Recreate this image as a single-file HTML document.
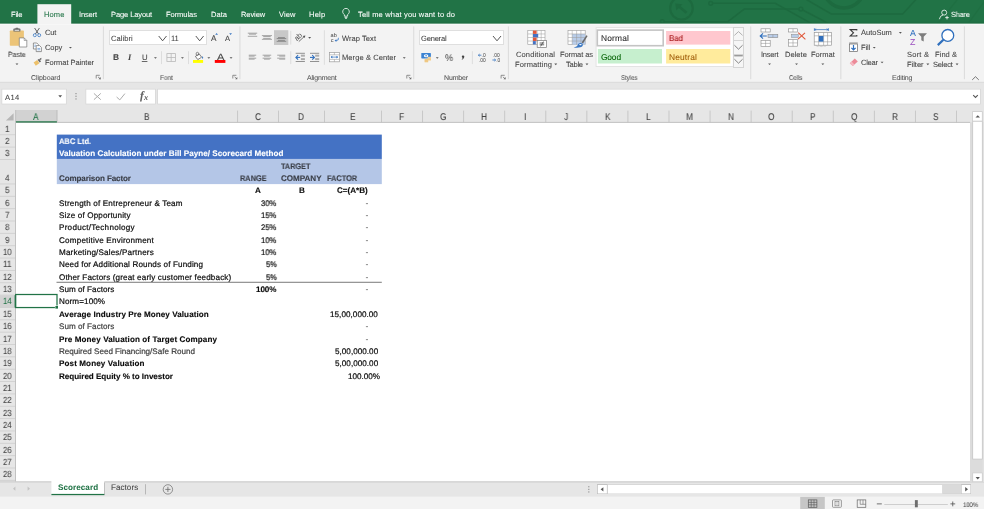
<!DOCTYPE html>
<html><head><meta charset="utf-8"><title>Excel</title>
<style>
html,body{margin:0;padding:0;}
body{width:984px;height:509px;overflow:hidden;position:relative;background:#fff;font-family:"Liberation Sans",sans-serif;}
body>div,body>span,body>svg{position:absolute;}
.t{white-space:pre;line-height:1;display:block;text-rendering:geometricPrecision;will-change:transform;}
svg{overflow:visible;display:block;}
</style></head><body>
<svg style="left:0;top:0" width="984" height="509" viewBox="0 0 984 509" shape-rendering="geometricPrecision"><rect x="0.00" y="0.00" width="984.00" height="82.20" fill="#f3f3f3"/><rect x="0.00" y="0.00" width="984.00" height="23.40" fill="#217346"/><rect x="0.00" y="21.90" width="984.00" height="1.50" fill="#1f6e43"/></svg>
<svg style="left:0;top:0;overflow:hidden" width="984" height="23.4" viewBox="0 0 984 23.4"><g fill="none" stroke="#1d6a3f" stroke-width="1.5">
<circle cx="681.5" cy="8.2" r="11.3" stroke-width="2.1"/>
<path d="M686.6 12.8 L677.2 4.9" stroke-width="2.6"/><path d="M675.4 3.4 L682.6 4.2 L676.4 10.4 Z" fill="#1d6a3f" stroke="none"/>
<circle cx="710.8" cy="3.3" r="1.9"/>
<path d="M712.8 3.3 H775.4 L812 23.8"/>
<circle cx="662.3" cy="21.6" r="1.9"/>
<path d="M664.3 21.8 H727.8 L744.3 9.1 H799"/>
<circle cx="801" cy="9.1" r="1.9"/>
<path d="M802.8 10 L822 20 L829 24"/>
<path d="M806.5 -0.5 L831.4 13.9 H902.8 L916.2 -0.5"/>
<circle cx="844" cy="-12.3" r="20.3" stroke-width="3.4"/>
<path d="M957.6 -0.5 L938 24" stroke-width="1.2" stroke="#1f6f42"/>
<path d="M985 1 L968 24" stroke-width="1.2" stroke="#1f6f42"/>
</g></svg>
<svg style="left:0;top:0" width="984" height="509" viewBox="0 0 984 509" shape-rendering="geometricPrecision"><rect x="0.00" y="24.00" width="984.00" height="0.90" fill="#f9f9f9"/><rect x="37.40" y="4.20" width="33.80" height="20.00" fill="#f3f3f3"/><rect x="0.00" y="82.00" width="984.00" height="28.00" fill="#e6e6e6"/><rect x="0.00" y="81.80" width="984.00" height="1.00" fill="#dbdbdb"/><rect x="1.50" y="88.80" width="65.20" height="15.60" fill="#d8d8d8"/><rect x="2.25" y="89.55" width="63.70" height="14.10" fill="#fff"/><rect x="85.50" y="88.80" width="70.30" height="15.60" fill="#d8d8d8"/><rect x="86.25" y="89.55" width="68.80" height="14.10" fill="#fff"/><rect x="157.20" y="88.80" width="823.60" height="15.60" fill="#d8d8d8"/><rect x="157.95" y="89.55" width="822.10" height="14.10" fill="#fff"/><rect x="0.00" y="110.00" width="984.00" height="371.70" fill="#e6e6e6"/><rect x="15.50" y="122.40" width="954.50" height="359.20" fill="#fff"/><rect x="0.00" y="481.60" width="984.00" height="27.40" fill="#f3f3f3"/><rect x="0.00" y="481.60" width="984.00" height="15.00" fill="#e6e6e6"/><rect x="0.00" y="481.40" width="984.00" height="1.00" fill="#c9c9c9"/></svg>
<span class="t" style="left:11.30px;top:11px;font-size:7.5px;color:#fff;letter-spacing:-0.195px;-webkit-text-stroke:0.07px currentColor;">File</span>
<span class="t" style="left:78.70px;top:11px;font-size:7.5px;color:#fff;letter-spacing:-0.152px;-webkit-text-stroke:0.07px currentColor;">Insert</span>
<span class="t" style="left:110.80px;top:11px;font-size:7.5px;color:#fff;letter-spacing:-0.092px;-webkit-text-stroke:0.07px currentColor;">Page Layout</span>
<span class="t" style="left:165.80px;top:11px;font-size:7.5px;color:#fff;letter-spacing:-0.051px;-webkit-text-stroke:0.07px currentColor;">Formulas</span>
<span class="t" style="left:210.80px;top:11px;font-size:7.5px;color:#fff;letter-spacing:0.019px;-webkit-text-stroke:0.07px currentColor;">Data</span>
<span class="t" style="left:240.80px;top:11px;font-size:7.5px;color:#fff;letter-spacing:-0.078px;-webkit-text-stroke:0.07px currentColor;">Review</span>
<span class="t" style="left:278.70px;top:11px;font-size:7.5px;color:#fff;letter-spacing:0.060px;-webkit-text-stroke:0.07px currentColor;">View</span>
<span class="t" style="left:309.20px;top:11px;font-size:7.5px;color:#fff;letter-spacing:0.225px;-webkit-text-stroke:0.07px currentColor;">Help</span>
<span class="t" style="left:358.30px;top:11px;font-size:7.5px;color:#fff;letter-spacing:0.171px;-webkit-text-stroke:0.07px currentColor;">Tell me what you want to do</span>
<span class="t" style="left:950.60px;top:11px;font-size:7.5px;color:#fff;transform:scaleX(0.9393);transform-origin:0 0;-webkit-text-stroke:0.07px currentColor;">Share</span>
<span class="t" style="left:43.80px;top:11px;font-size:7.5px;color:#217346;letter-spacing:0.131px;-webkit-text-stroke:0.07px currentColor;">Home</span>
<svg style="left:0;top:0" width="984" height="509" viewBox="0 0 984 509" shape-rendering="geometricPrecision"><rect x="15.90" y="110.00" width="41.00" height="12.40" fill="#d2d2d2"/></svg>
<span class="t" style="left:33.44px;top:113px;font-size:9.8px;color:#217346;transform:scaleX(0.86);transform-origin:0 0;-webkit-text-stroke:0.07px currentColor;">A</span>
<svg style="left:0;top:0" width="984" height="509" viewBox="0 0 984 509" shape-rendering="geometricPrecision"><rect x="56.55" y="110.00" width="0.90" height="11.80" fill="#b8b8b8"/></svg>
<span class="t" style="left:144.49px;top:113px;font-size:9.8px;color:#444;transform:scaleX(0.86);transform-origin:0 0;-webkit-text-stroke:0.07px currentColor;">B</span>
<svg style="left:0;top:0" width="984" height="509" viewBox="0 0 984 509" shape-rendering="geometricPrecision"><rect x="237.15" y="110.60" width="0.90" height="11.80" fill="#c4c4c4"/></svg>
<span class="t" style="left:255.01px;top:113px;font-size:9.8px;color:#444;transform:scaleX(0.86);transform-origin:0 0;-webkit-text-stroke:0.07px currentColor;">C</span>
<svg style="left:0;top:0" width="984" height="509" viewBox="0 0 984 509" shape-rendering="geometricPrecision"><rect x="278.05" y="110.60" width="0.90" height="11.80" fill="#c4c4c4"/></svg>
<span class="t" style="left:298.46px;top:113px;font-size:9.8px;color:#444;transform:scaleX(0.86);transform-origin:0 0;-webkit-text-stroke:0.07px currentColor;">D</span>
<svg style="left:0;top:0" width="984" height="509" viewBox="0 0 984 509" shape-rendering="geometricPrecision"><rect x="324.05" y="110.60" width="0.90" height="11.80" fill="#c4c4c4"/></svg>
<span class="t" style="left:350.19px;top:113px;font-size:9.8px;color:#444;transform:scaleX(0.86);transform-origin:0 0;-webkit-text-stroke:0.07px currentColor;">E</span>
<svg style="left:0;top:0" width="984" height="509" viewBox="0 0 984 509" shape-rendering="geometricPrecision"><rect x="381.05" y="110.60" width="0.90" height="11.80" fill="#c4c4c4"/></svg>
<span class="t" style="left:399.46px;top:113px;font-size:9.8px;color:#444;transform:scaleX(0.86);transform-origin:0 0;-webkit-text-stroke:0.07px currentColor;">F</span>
<svg style="left:0;top:0" width="984" height="509" viewBox="0 0 984 509" shape-rendering="geometricPrecision"><rect x="422.12" y="110.60" width="0.90" height="11.80" fill="#c4c4c4"/></svg>
<span class="t" style="left:439.83px;top:113px;font-size:9.8px;color:#444;transform:scaleX(0.86);transform-origin:0 0;-webkit-text-stroke:0.07px currentColor;">G</span>
<svg style="left:0;top:0" width="984" height="509" viewBox="0 0 984 509" shape-rendering="geometricPrecision"><rect x="463.19" y="110.60" width="0.90" height="11.80" fill="#c4c4c4"/></svg>
<span class="t" style="left:481.13px;top:113px;font-size:9.8px;color:#444;transform:scaleX(0.86);transform-origin:0 0;-webkit-text-stroke:0.07px currentColor;">H</span>
<svg style="left:0;top:0" width="984" height="509" viewBox="0 0 984 509" shape-rendering="geometricPrecision"><rect x="504.26" y="110.60" width="0.90" height="11.80" fill="#c4c4c4"/></svg>
<span class="t" style="left:524.07px;top:113px;font-size:9.8px;color:#444;transform:scaleX(0.86);transform-origin:0 0;-webkit-text-stroke:0.07px currentColor;">I</span>
<svg style="left:0;top:0" width="984" height="509" viewBox="0 0 984 509" shape-rendering="geometricPrecision"><rect x="545.33" y="110.60" width="0.90" height="11.80" fill="#c4c4c4"/></svg>
<span class="t" style="left:564.21px;top:113px;font-size:9.8px;color:#444;transform:scaleX(0.86);transform-origin:0 0;-webkit-text-stroke:0.07px currentColor;">J</span>
<svg style="left:0;top:0" width="984" height="509" viewBox="0 0 984 509" shape-rendering="geometricPrecision"><rect x="586.40" y="110.60" width="0.90" height="11.80" fill="#c4c4c4"/></svg>
<span class="t" style="left:604.57px;top:113px;font-size:9.8px;color:#444;transform:scaleX(0.86);transform-origin:0 0;-webkit-text-stroke:0.07px currentColor;">K</span>
<svg style="left:0;top:0" width="984" height="509" viewBox="0 0 984 509" shape-rendering="geometricPrecision"><rect x="627.47" y="110.60" width="0.90" height="11.80" fill="#c4c4c4"/></svg>
<span class="t" style="left:646.11px;top:113px;font-size:9.8px;color:#444;transform:scaleX(0.86);transform-origin:0 0;-webkit-text-stroke:0.07px currentColor;">L</span>
<svg style="left:0;top:0" width="984" height="509" viewBox="0 0 984 509" shape-rendering="geometricPrecision"><rect x="668.54" y="110.60" width="0.90" height="11.80" fill="#c4c4c4"/></svg>
<span class="t" style="left:686.01px;top:113px;font-size:9.8px;color:#444;transform:scaleX(0.86);transform-origin:0 0;-webkit-text-stroke:0.07px currentColor;">M</span>
<svg style="left:0;top:0" width="984" height="509" viewBox="0 0 984 509" shape-rendering="geometricPrecision"><rect x="709.61" y="110.60" width="0.90" height="11.80" fill="#c4c4c4"/></svg>
<span class="t" style="left:727.55px;top:113px;font-size:9.8px;color:#444;transform:scaleX(0.86);transform-origin:0 0;-webkit-text-stroke:0.07px currentColor;">N</span>
<svg style="left:0;top:0" width="984" height="509" viewBox="0 0 984 509" shape-rendering="geometricPrecision"><rect x="750.68" y="110.60" width="0.90" height="11.80" fill="#c4c4c4"/></svg>
<span class="t" style="left:768.39px;top:113px;font-size:9.8px;color:#444;transform:scaleX(0.86);transform-origin:0 0;-webkit-text-stroke:0.07px currentColor;">O</span>
<svg style="left:0;top:0" width="984" height="509" viewBox="0 0 984 509" shape-rendering="geometricPrecision"><rect x="791.75" y="110.60" width="0.90" height="11.80" fill="#c4c4c4"/></svg>
<span class="t" style="left:809.92px;top:113px;font-size:9.8px;color:#444;transform:scaleX(0.86);transform-origin:0 0;-webkit-text-stroke:0.07px currentColor;">P</span>
<svg style="left:0;top:0" width="984" height="509" viewBox="0 0 984 509" shape-rendering="geometricPrecision"><rect x="832.82" y="110.60" width="0.90" height="11.80" fill="#c4c4c4"/></svg>
<span class="t" style="left:850.53px;top:113px;font-size:9.8px;color:#444;transform:scaleX(0.86);transform-origin:0 0;-webkit-text-stroke:0.07px currentColor;">Q</span>
<svg style="left:0;top:0" width="984" height="509" viewBox="0 0 984 509" shape-rendering="geometricPrecision"><rect x="873.89" y="110.60" width="0.90" height="11.80" fill="#c4c4c4"/></svg>
<span class="t" style="left:891.83px;top:113px;font-size:9.8px;color:#444;transform:scaleX(0.86);transform-origin:0 0;-webkit-text-stroke:0.07px currentColor;">R</span>
<svg style="left:0;top:0" width="984" height="509" viewBox="0 0 984 509" shape-rendering="geometricPrecision"><rect x="914.96" y="110.60" width="0.90" height="11.80" fill="#c4c4c4"/></svg>
<span class="t" style="left:933.13px;top:113px;font-size:9.8px;color:#444;transform:scaleX(0.86);transform-origin:0 0;-webkit-text-stroke:0.07px currentColor;">S</span>
<svg style="left:0;top:0" width="984" height="509" viewBox="0 0 984 509" shape-rendering="geometricPrecision"><rect x="956.03" y="110.60" width="0.90" height="11.80" fill="#c4c4c4"/><rect x="15.20" y="110.00" width="0.90" height="12.40" fill="#bdbdbd"/><rect x="15.50" y="121.90" width="955.00" height="0.90" fill="#bcbcbc"/><rect x="15.90" y="121.25" width="41.00" height="1.30" fill="#2a7a4e"/></svg>
<svg style="left:0.00px;top:110.00px" width="16" height="12.4" viewBox="0 0 16 12.4"><path d="M13.6 3.2 V10.6 H5.9 Z" fill="#b7b7b7"/></svg>
<span class="t" style="left:4.75px;top:125px;font-size:9.0px;color:#444;transform:scaleX(0.9);transform-origin:0 0;-webkit-text-stroke:0.07px currentColor;">1</span>
<svg style="left:0;top:0" width="984" height="509" viewBox="0 0 984 509" shape-rendering="geometricPrecision"><rect x="0.00" y="134.30" width="15.50" height="0.90" fill="#d0d0d0"/></svg>
<span class="t" style="left:4.75px;top:137px;font-size:9.0px;color:#444;transform:scaleX(0.9);transform-origin:0 0;-webkit-text-stroke:0.07px currentColor;">2</span>
<svg style="left:0;top:0" width="984" height="509" viewBox="0 0 984 509" shape-rendering="geometricPrecision"><rect x="0.00" y="146.65" width="15.50" height="0.90" fill="#d0d0d0"/></svg>
<span class="t" style="left:4.75px;top:149px;font-size:9.0px;color:#444;transform:scaleX(0.9);transform-origin:0 0;-webkit-text-stroke:0.07px currentColor;">3</span>
<svg style="left:0;top:0" width="984" height="509" viewBox="0 0 984 509" shape-rendering="geometricPrecision"><rect x="0.00" y="159.00" width="15.50" height="0.90" fill="#d0d0d0"/></svg>
<span class="t" style="left:4.75px;top:174px;font-size:9.0px;color:#444;transform:scaleX(0.9);transform-origin:0 0;-webkit-text-stroke:0.07px currentColor;">4</span>
<svg style="left:0;top:0" width="984" height="509" viewBox="0 0 984 509" shape-rendering="geometricPrecision"><rect x="0.00" y="183.50" width="15.50" height="0.90" fill="#d0d0d0"/></svg>
<span class="t" style="left:4.75px;top:186px;font-size:9.0px;color:#444;transform:scaleX(0.9);transform-origin:0 0;-webkit-text-stroke:0.07px currentColor;">5</span>
<svg style="left:0;top:0" width="984" height="509" viewBox="0 0 984 509" shape-rendering="geometricPrecision"><rect x="0.00" y="195.85" width="15.50" height="0.90" fill="#d0d0d0"/></svg>
<span class="t" style="left:4.75px;top:199px;font-size:9.0px;color:#444;transform:scaleX(0.9);transform-origin:0 0;-webkit-text-stroke:0.07px currentColor;">6</span>
<svg style="left:0;top:0" width="984" height="509" viewBox="0 0 984 509" shape-rendering="geometricPrecision"><rect x="0.00" y="208.20" width="15.50" height="0.90" fill="#d0d0d0"/></svg>
<span class="t" style="left:4.75px;top:211px;font-size:9.0px;color:#444;transform:scaleX(0.9);transform-origin:0 0;-webkit-text-stroke:0.07px currentColor;">7</span>
<svg style="left:0;top:0" width="984" height="509" viewBox="0 0 984 509" shape-rendering="geometricPrecision"><rect x="0.00" y="220.55" width="15.50" height="0.90" fill="#d0d0d0"/></svg>
<span class="t" style="left:4.75px;top:223px;font-size:9.0px;color:#444;transform:scaleX(0.9);transform-origin:0 0;-webkit-text-stroke:0.07px currentColor;">8</span>
<svg style="left:0;top:0" width="984" height="509" viewBox="0 0 984 509" shape-rendering="geometricPrecision"><rect x="0.00" y="232.90" width="15.50" height="0.90" fill="#d0d0d0"/></svg>
<span class="t" style="left:4.75px;top:236px;font-size:9.0px;color:#444;transform:scaleX(0.9);transform-origin:0 0;-webkit-text-stroke:0.07px currentColor;">9</span>
<svg style="left:0;top:0" width="984" height="509" viewBox="0 0 984 509" shape-rendering="geometricPrecision"><rect x="0.00" y="245.25" width="15.50" height="0.90" fill="#d0d0d0"/></svg>
<span class="t" style="left:3.00px;top:248px;font-size:9.0px;color:#444;transform:scaleX(0.85904699474021);transform-origin:0 0;-webkit-text-stroke:0.07px currentColor;">10</span>
<svg style="left:0;top:0" width="984" height="509" viewBox="0 0 984 509" shape-rendering="geometricPrecision"><rect x="0.00" y="257.60" width="15.50" height="0.90" fill="#d0d0d0"/></svg>
<span class="t" style="left:3.00px;top:260px;font-size:9.0px;color:#444;transform:scaleX(0.920462907217874);transform-origin:0 0;-webkit-text-stroke:0.07px currentColor;">11</span>
<svg style="left:0;top:0" width="984" height="509" viewBox="0 0 984 509" shape-rendering="geometricPrecision"><rect x="0.00" y="269.95" width="15.50" height="0.90" fill="#d0d0d0"/></svg>
<span class="t" style="left:3.00px;top:273px;font-size:9.0px;color:#444;transform:scaleX(0.85904699474021);transform-origin:0 0;-webkit-text-stroke:0.07px currentColor;">12</span>
<svg style="left:0;top:0" width="984" height="509" viewBox="0 0 984 509" shape-rendering="geometricPrecision"><rect x="0.00" y="282.30" width="15.50" height="0.90" fill="#d0d0d0"/></svg>
<span class="t" style="left:3.00px;top:285px;font-size:9.0px;color:#444;transform:scaleX(0.85904699474021);transform-origin:0 0;-webkit-text-stroke:0.07px currentColor;">13</span>
<svg style="left:0;top:0" width="984" height="509" viewBox="0 0 984 509" shape-rendering="geometricPrecision"><rect x="0.00" y="294.65" width="15.50" height="0.90" fill="#d0d0d0"/><rect x="0.00" y="295.15" width="15.50" height="12.35" fill="#d2d2d2"/></svg>
<span class="t" style="left:3.00px;top:297px;font-size:9.0px;color:#217346;transform:scaleX(0.85904699474021);transform-origin:0 0;-webkit-text-stroke:0.07px currentColor;">14</span>
<svg style="left:0;top:0" width="984" height="509" viewBox="0 0 984 509" shape-rendering="geometricPrecision"><rect x="0.00" y="307.00" width="15.50" height="0.90" fill="#d0d0d0"/></svg>
<span class="t" style="left:3.00px;top:310px;font-size:9.0px;color:#444;transform:scaleX(0.85904699474021);transform-origin:0 0;-webkit-text-stroke:0.07px currentColor;">15</span>
<svg style="left:0;top:0" width="984" height="509" viewBox="0 0 984 509" shape-rendering="geometricPrecision"><rect x="0.00" y="319.35" width="15.50" height="0.90" fill="#d0d0d0"/></svg>
<span class="t" style="left:3.00px;top:322px;font-size:9.0px;color:#444;transform:scaleX(0.85904699474021);transform-origin:0 0;-webkit-text-stroke:0.07px currentColor;">16</span>
<svg style="left:0;top:0" width="984" height="509" viewBox="0 0 984 509" shape-rendering="geometricPrecision"><rect x="0.00" y="331.70" width="15.50" height="0.90" fill="#d0d0d0"/></svg>
<span class="t" style="left:3.00px;top:335px;font-size:9.0px;color:#444;transform:scaleX(0.85904699474021);transform-origin:0 0;-webkit-text-stroke:0.07px currentColor;">17</span>
<svg style="left:0;top:0" width="984" height="509" viewBox="0 0 984 509" shape-rendering="geometricPrecision"><rect x="0.00" y="344.05" width="15.50" height="0.90" fill="#d0d0d0"/></svg>
<span class="t" style="left:3.00px;top:347px;font-size:9.0px;color:#444;transform:scaleX(0.85904699474021);transform-origin:0 0;-webkit-text-stroke:0.07px currentColor;">18</span>
<svg style="left:0;top:0" width="984" height="509" viewBox="0 0 984 509" shape-rendering="geometricPrecision"><rect x="0.00" y="356.40" width="15.50" height="0.90" fill="#d0d0d0"/></svg>
<span class="t" style="left:3.00px;top:359px;font-size:9.0px;color:#444;transform:scaleX(0.85904699474021);transform-origin:0 0;-webkit-text-stroke:0.07px currentColor;">19</span>
<svg style="left:0;top:0" width="984" height="509" viewBox="0 0 984 509" shape-rendering="geometricPrecision"><rect x="0.00" y="368.75" width="15.50" height="0.90" fill="#d0d0d0"/></svg>
<span class="t" style="left:3.00px;top:372px;font-size:9.0px;color:#444;transform:scaleX(0.85904699474021);transform-origin:0 0;-webkit-text-stroke:0.07px currentColor;">20</span>
<svg style="left:0;top:0" width="984" height="509" viewBox="0 0 984 509" shape-rendering="geometricPrecision"><rect x="0.00" y="381.10" width="15.50" height="0.90" fill="#d0d0d0"/></svg>
<span class="t" style="left:3.00px;top:384px;font-size:9.0px;color:#444;transform:scaleX(0.85904699474021);transform-origin:0 0;-webkit-text-stroke:0.07px currentColor;">21</span>
<svg style="left:0;top:0" width="984" height="509" viewBox="0 0 984 509" shape-rendering="geometricPrecision"><rect x="0.00" y="393.45" width="15.50" height="0.90" fill="#d0d0d0"/></svg>
<span class="t" style="left:3.00px;top:396px;font-size:9.0px;color:#444;transform:scaleX(0.85904699474021);transform-origin:0 0;-webkit-text-stroke:0.07px currentColor;">22</span>
<svg style="left:0;top:0" width="984" height="509" viewBox="0 0 984 509" shape-rendering="geometricPrecision"><rect x="0.00" y="405.80" width="15.50" height="0.90" fill="#d0d0d0"/></svg>
<span class="t" style="left:3.00px;top:409px;font-size:9.0px;color:#444;transform:scaleX(0.85904699474021);transform-origin:0 0;-webkit-text-stroke:0.07px currentColor;">23</span>
<svg style="left:0;top:0" width="984" height="509" viewBox="0 0 984 509" shape-rendering="geometricPrecision"><rect x="0.00" y="418.15" width="15.50" height="0.90" fill="#d0d0d0"/></svg>
<span class="t" style="left:3.00px;top:421px;font-size:9.0px;color:#444;transform:scaleX(0.85904699474021);transform-origin:0 0;-webkit-text-stroke:0.07px currentColor;">24</span>
<svg style="left:0;top:0" width="984" height="509" viewBox="0 0 984 509" shape-rendering="geometricPrecision"><rect x="0.00" y="430.50" width="15.50" height="0.90" fill="#d0d0d0"/></svg>
<span class="t" style="left:3.00px;top:433px;font-size:9.0px;color:#444;transform:scaleX(0.85904699474021);transform-origin:0 0;-webkit-text-stroke:0.07px currentColor;">25</span>
<svg style="left:0;top:0" width="984" height="509" viewBox="0 0 984 509" shape-rendering="geometricPrecision"><rect x="0.00" y="442.85" width="15.50" height="0.90" fill="#d0d0d0"/></svg>
<span class="t" style="left:3.00px;top:446px;font-size:9.0px;color:#444;transform:scaleX(0.85904699474021);transform-origin:0 0;-webkit-text-stroke:0.07px currentColor;">26</span>
<svg style="left:0;top:0" width="984" height="509" viewBox="0 0 984 509" shape-rendering="geometricPrecision"><rect x="0.00" y="455.20" width="15.50" height="0.90" fill="#d0d0d0"/></svg>
<span class="t" style="left:3.00px;top:458px;font-size:9.0px;color:#444;transform:scaleX(0.85904699474021);transform-origin:0 0;-webkit-text-stroke:0.07px currentColor;">27</span>
<svg style="left:0;top:0" width="984" height="509" viewBox="0 0 984 509" shape-rendering="geometricPrecision"><rect x="0.00" y="467.55" width="15.50" height="0.90" fill="#d0d0d0"/></svg>
<span class="t" style="left:3.00px;top:470px;font-size:9.0px;color:#444;transform:scaleX(0.85904699474021);transform-origin:0 0;-webkit-text-stroke:0.07px currentColor;">28</span>
<svg style="left:0;top:0" width="984" height="509" viewBox="0 0 984 509" shape-rendering="geometricPrecision"><rect x="0.00" y="479.90" width="15.50" height="0.90" fill="#d0d0d0"/><rect x="15.00" y="122.40" width="0.90" height="359.00" fill="#bdbdbd"/><rect x="14.60" y="295.15" width="1.30" height="12.40" fill="#217346"/><rect x="970.00" y="110.00" width="14.00" height="12.40" fill="#e6e6e6"/><rect x="970.00" y="122.40" width="14.00" height="359.40" fill="#dcdcdc"/><rect x="982.60" y="122.40" width="1.40" height="359.40" fill="#e2e2e2"/><rect x="972.40" y="121.00" width="10.20" height="338.40" fill="#c6c6c6"/><rect x="973.10" y="121.60" width="8.80" height="337.10" fill="#fff"/><rect x="972.20" y="111.30" width="10.40" height="10.00" fill="#c9c9c9"/><rect x="972.90" y="112.00" width="9.00" height="8.70" fill="#fff"/><rect x="972.40" y="472.60" width="10.20" height="9.40" fill="#cdcdcd"/><rect x="973.10" y="473.30" width="8.80" height="8.00" fill="#fff"/></svg>
<svg style="left:973.00px;top:111.50px" width="9.4" height="9.2" viewBox="0 0 9.4 9.2"><path d="M2.5 5.5 H7.0 L4.75 3.2 Z" fill="#555"/></svg>
<svg style="left:973.00px;top:472.70px" width="9.4" height="9.2" viewBox="0 0 9.4 9.2"><path d="M2.6 4.0 H6.9 L4.75 6.5 Z" fill="#555"/></svg>
<svg style="left:0;top:0" width="984" height="509" viewBox="0 0 984 509" shape-rendering="geometricPrecision"><rect x="56.80" y="134.60" width="325.00" height="24.40" fill="#4472c4"/><rect x="56.80" y="158.90" width="325.00" height="25.20" fill="#b4c6e7"/></svg>
<span class="t" style="left:58.90px;top:138px;font-size:8.1px;color:#fff;transform:scaleX(0.9266);transform-origin:0 0;font-weight:700;-webkit-text-stroke:0.12px currentColor;">ABC Ltd.</span>
<span class="t" style="left:59.20px;top:150px;font-size:8.1px;color:#fff;letter-spacing:0.033px;font-weight:700;-webkit-text-stroke:0.12px currentColor;">Valuation Calculation under Bill Payne/ Scorecard Method</span>
<span class="t" style="left:59.20px;top:175px;font-size:8.1px;color:#3a3e47;letter-spacing:-0.141px;font-weight:700;-webkit-text-stroke:0.12px currentColor;">Comparison Factor</span>
<span class="t" style="left:239.60px;top:175px;font-size:8.1px;color:#3a3e47;transform:scaleX(0.9093);transform-origin:0 0;font-weight:700;-webkit-text-stroke:0.12px currentColor;">RANGE</span>
<span class="t" style="left:280.60px;top:163px;font-size:8.1px;color:#3a3e47;transform:scaleX(0.8992);transform-origin:0 0;font-weight:700;-webkit-text-stroke:0.12px currentColor;">TARGET</span>
<span class="t" style="left:280.60px;top:175px;font-size:8.1px;color:#3a3e47;letter-spacing:-0.034px;font-weight:700;-webkit-text-stroke:0.12px currentColor;">COMPANY</span>
<span class="t" style="left:326.80px;top:175px;font-size:8.1px;color:#3a3e47;transform:scaleX(0.9109);transform-origin:0 0;font-weight:700;-webkit-text-stroke:0.12px currentColor;">FACTOR</span>
<span class="t" style="left:254.98px;top:187px;font-size:8.1px;color:#0a0a0a;font-weight:700;-webkit-text-stroke:0.12px currentColor;">A</span>
<span class="t" style="left:298.88px;top:187px;font-size:8.1px;color:#0a0a0a;font-weight:700;-webkit-text-stroke:0.12px currentColor;">B</span>
<span class="t" style="left:337.40px;top:187px;font-size:8.1px;color:#0a0a0a;font-weight:700;-webkit-text-stroke:0.12px currentColor;">C=(A*B)</span>
<span class="t" style="left:58.90px;top:200px;font-size:8.1px;color:#0a0a0a;letter-spacing:0.163px;-webkit-text-stroke:0.20px currentColor;">Strength of Entrepreneur &amp; Team</span>
<span class="t" style="left:261.30px;top:200px;font-size:8.1px;color:#0a0a0a;transform:scaleX(0.9437);transform-origin:0 0;-webkit-text-stroke:0.20px currentColor;">30%</span>
<svg style="left:0;top:0" width="984" height="509" viewBox="0 0 984 509" shape-rendering="geometricPrecision"><rect x="365.90" y="203.30" width="2.10" height="0.80" fill="#707070"/></svg>
<span class="t" style="left:58.90px;top:212px;font-size:8.1px;color:#0a0a0a;letter-spacing:0.151px;-webkit-text-stroke:0.20px currentColor;">Size of Opportunity</span>
<span class="t" style="left:261.30px;top:212px;font-size:8.1px;color:#0a0a0a;transform:scaleX(0.9437);transform-origin:0 0;-webkit-text-stroke:0.20px currentColor;">15%</span>
<svg style="left:0;top:0" width="984" height="509" viewBox="0 0 984 509" shape-rendering="geometricPrecision"><rect x="365.90" y="215.30" width="2.10" height="0.80" fill="#707070"/></svg>
<span class="t" style="left:58.90px;top:224px;font-size:8.1px;color:#0a0a0a;letter-spacing:0.262px;-webkit-text-stroke:0.20px currentColor;">Product/Technology</span>
<span class="t" style="left:261.30px;top:224px;font-size:8.1px;color:#0a0a0a;transform:scaleX(0.9437);transform-origin:0 0;-webkit-text-stroke:0.20px currentColor;">25%</span>
<svg style="left:0;top:0" width="984" height="509" viewBox="0 0 984 509" shape-rendering="geometricPrecision"><rect x="365.90" y="227.30" width="2.10" height="0.80" fill="#707070"/></svg>
<span class="t" style="left:58.90px;top:237px;font-size:8.1px;color:#0a0a0a;letter-spacing:0.198px;-webkit-text-stroke:0.20px currentColor;">Competitive Environment</span>
<span class="t" style="left:261.30px;top:237px;font-size:8.1px;color:#0a0a0a;transform:scaleX(0.9437);transform-origin:0 0;-webkit-text-stroke:0.20px currentColor;">10%</span>
<svg style="left:0;top:0" width="984" height="509" viewBox="0 0 984 509" shape-rendering="geometricPrecision"><rect x="365.90" y="240.30" width="2.10" height="0.80" fill="#707070"/></svg>
<span class="t" style="left:58.90px;top:249px;font-size:8.1px;color:#0a0a0a;letter-spacing:0.170px;-webkit-text-stroke:0.20px currentColor;">Marketing/Sales/Partners</span>
<span class="t" style="left:261.30px;top:249px;font-size:8.1px;color:#0a0a0a;transform:scaleX(0.9437);transform-origin:0 0;-webkit-text-stroke:0.20px currentColor;">10%</span>
<svg style="left:0;top:0" width="984" height="509" viewBox="0 0 984 509" shape-rendering="geometricPrecision"><rect x="365.90" y="252.30" width="2.10" height="0.80" fill="#707070"/></svg>
<span class="t" style="left:58.90px;top:261px;font-size:8.1px;color:#0a0a0a;letter-spacing:0.138px;-webkit-text-stroke:0.20px currentColor;">Need for Additional Rounds of Funding</span>
<span class="t" style="left:265.80px;top:261px;font-size:8.1px;color:#0a0a0a;transform:scaleX(0.9225);transform-origin:0 0;-webkit-text-stroke:0.20px currentColor;">5%</span>
<svg style="left:0;top:0" width="984" height="509" viewBox="0 0 984 509" shape-rendering="geometricPrecision"><rect x="365.90" y="264.30" width="2.10" height="0.80" fill="#707070"/></svg>
<span class="t" style="left:58.90px;top:274px;font-size:8.1px;color:#0a0a0a;letter-spacing:0.142px;-webkit-text-stroke:0.20px currentColor;">Other Factors (great early customer feedback)</span>
<span class="t" style="left:265.80px;top:274px;font-size:8.1px;color:#0a0a0a;transform:scaleX(0.9225);transform-origin:0 0;-webkit-text-stroke:0.20px currentColor;">5%</span>
<svg style="left:0;top:0" width="984" height="509" viewBox="0 0 984 509" shape-rendering="geometricPrecision"><rect x="365.90" y="277.30" width="2.10" height="0.80" fill="#707070"/><rect x="56.50" y="281.80" width="325.30" height="0.90" fill="#6a6a6a"/></svg>
<span class="t" style="left:58.90px;top:286px;font-size:8.1px;color:#0a0a0a;letter-spacing:0.033px;-webkit-text-stroke:0.20px currentColor;">Sum of Factors</span>
<span class="t" style="left:256.20px;top:286px;font-size:8.1px;color:#0a0a0a;letter-spacing:-0.106px;font-weight:700;-webkit-text-stroke:0.12px currentColor;">100%</span>
<svg style="left:0;top:0" width="984" height="509" viewBox="0 0 984 509" shape-rendering="geometricPrecision"><rect x="365.90" y="289.30" width="2.10" height="0.80" fill="#707070"/></svg>
<span class="t" style="left:58.90px;top:298px;font-size:8.1px;color:#0a0a0a;letter-spacing:0.107px;-webkit-text-stroke:0.20px currentColor;">Norm=100%</span>
<span class="t" style="left:58.90px;top:311px;font-size:8.1px;color:#0a0a0a;letter-spacing:0.072px;font-weight:700;-webkit-text-stroke:0.12px currentColor;">Average Industry Pre Money Valuation</span>
<span class="t" style="left:329.80px;top:311px;font-size:8.1px;color:#0a0a0a;letter-spacing:0.055px;-webkit-text-stroke:0.20px currentColor;">15,00,000.00</span>
<span class="t" style="left:58.90px;top:323px;font-size:8.1px;color:#3d3d3d;letter-spacing:0.033px;-webkit-text-stroke:0.20px currentColor;">Sum of Factors</span>
<svg style="left:0;top:0" width="984" height="509" viewBox="0 0 984 509" shape-rendering="geometricPrecision"><rect x="365.90" y="326.30" width="2.10" height="0.80" fill="#707070"/></svg>
<span class="t" style="left:58.90px;top:336px;font-size:8.1px;color:#0a0a0a;letter-spacing:0.095px;font-weight:700;-webkit-text-stroke:0.12px currentColor;">Pre Money Valuation of Target Company</span>
<svg style="left:0;top:0" width="984" height="509" viewBox="0 0 984 509" shape-rendering="geometricPrecision"><rect x="365.90" y="339.30" width="2.10" height="0.80" fill="#707070"/></svg>
<span class="t" style="left:58.90px;top:348px;font-size:8.1px;color:#3d3d3d;letter-spacing:-0.010px;-webkit-text-stroke:0.20px currentColor;">Required Seed Financing/Safe Round</span>
<span class="t" style="left:334.50px;top:348px;font-size:8.1px;color:#0a0a0a;letter-spacing:0.041px;-webkit-text-stroke:0.20px currentColor;">5,00,000.00</span>
<span class="t" style="left:58.90px;top:360px;font-size:8.1px;color:#0a0a0a;letter-spacing:0.099px;font-weight:700;-webkit-text-stroke:0.12px currentColor;">Post Money Valuation</span>
<span class="t" style="left:334.50px;top:360px;font-size:8.1px;color:#0a0a0a;letter-spacing:0.041px;-webkit-text-stroke:0.20px currentColor;">5,00,000.00</span>
<span class="t" style="left:58.90px;top:373px;font-size:8.1px;color:#0a0a0a;letter-spacing:-0.040px;font-weight:700;-webkit-text-stroke:0.12px currentColor;">Required Equity % to Investor</span>
<span class="t" style="left:348.00px;top:373px;font-size:8.1px;color:#0a0a0a;-webkit-text-stroke:0.20px currentColor;">100.00%</span>
<svg style="left:0.00px;top:0.00px" width="984" height="509" viewBox="0 0 984 509"><rect x="15.7" y="294.50" width="41.3" height="13.05" fill="none" stroke="#217346" stroke-width="1.25"/><rect x="54.9" y="305.50" width="3.2" height="3.2" fill="#fff"/><rect x="55.4" y="306.00" width="2.6" height="2.6" fill="#217346"/></svg>
<svg style="left:0;top:0" width="984" height="509" viewBox="0 0 984 509" shape-rendering="geometricPrecision"><rect x="102.90" y="26.40" width="0.90" height="52.80" fill="#d8d8d8"/><rect x="239.50" y="26.40" width="0.90" height="52.80" fill="#d8d8d8"/><rect x="413.30" y="26.40" width="0.90" height="52.80" fill="#d8d8d8"/><rect x="507.90" y="26.40" width="0.90" height="52.80" fill="#d8d8d8"/><rect x="750.30" y="26.40" width="0.90" height="52.80" fill="#d8d8d8"/><rect x="840.40" y="26.40" width="0.90" height="52.80" fill="#d8d8d8"/><rect x="963.90" y="26.40" width="0.90" height="52.80" fill="#d8d8d8"/><rect x="161.20" y="51.20" width="0.80" height="12.90" fill="#d8d8d8"/><rect x="188.00" y="51.20" width="0.80" height="12.90" fill="#d8d8d8"/><rect x="290.40" y="30.80" width="0.80" height="13.80" fill="#d8d8d8"/><rect x="290.40" y="51.20" width="0.80" height="12.90" fill="#d8d8d8"/><rect x="323.90" y="30.20" width="0.80" height="34.60" fill="#d8d8d8"/><rect x="471.90" y="51.20" width="0.80" height="12.90" fill="#d8d8d8"/></svg>
<span class="t" style="left:30.60px;top:75px;font-size:7.0px;color:#555;letter-spacing:-0.058px;-webkit-text-stroke:0.07px currentColor;">Clipboard</span>
<span class="t" style="left:159.70px;top:75px;font-size:7.0px;color:#555;transform:scaleX(0.9281);transform-origin:0 0;-webkit-text-stroke:0.07px currentColor;">Font</span>
<span class="t" style="left:306.50px;top:75px;font-size:7.0px;color:#555;letter-spacing:-0.179px;-webkit-text-stroke:0.07px currentColor;">Alignment</span>
<span class="t" style="left:443.80px;top:75px;font-size:7.0px;color:#555;letter-spacing:-0.160px;-webkit-text-stroke:0.07px currentColor;">Number</span>
<span class="t" style="left:620.80px;top:75px;font-size:7.0px;color:#555;transform:scaleX(0.8603);transform-origin:0 0;-webkit-text-stroke:0.07px currentColor;">Styles</span>
<span class="t" style="left:788.70px;top:75px;font-size:7.0px;color:#555;transform:scaleX(0.8548);transform-origin:0 0;-webkit-text-stroke:0.07px currentColor;">Cells</span>
<span class="t" style="left:892.10px;top:75px;font-size:7.0px;color:#555;letter-spacing:-0.151px;-webkit-text-stroke:0.07px currentColor;">Editing</span>
<span class="t" style="left:8.30px;top:51px;font-size:7.5px;color:#444;transform:scaleX(0.9125);transform-origin:0 0;-webkit-text-stroke:0.07px currentColor;">Paste</span>
<span class="t" style="left:44.70px;top:29px;font-size:7.5px;color:#444;letter-spacing:-0.186px;-webkit-text-stroke:0.07px currentColor;">Cut</span>
<span class="t" style="left:44.70px;top:44px;font-size:7.5px;color:#444;letter-spacing:-0.070px;-webkit-text-stroke:0.07px currentColor;">Copy</span>
<span class="t" style="left:44.70px;top:59px;font-size:7.5px;color:#444;letter-spacing:-0.046px;-webkit-text-stroke:0.07px currentColor;">Format Painter</span>
<div style="left:108.8px;top:30.2px;width:59.6px;height:12.5px;background:#fff;border:0.8px solid #dfdfdf;"></div>
<div style="left:169.2px;top:30.2px;width:36.3px;height:12.5px;background:#fff;border:0.8px solid #dfdfdf;"></div>
<span class="t" style="left:110.80px;top:35px;font-size:7.5px;color:#444;letter-spacing:0.057px;-webkit-text-stroke:0.07px currentColor;">Calibri</span>
<span class="t" style="left:171.20px;top:35px;font-size:7.5px;color:#444;-webkit-text-stroke:0.07px currentColor;">11</span>
<span class="t" style="left:211.00px;top:35px;font-size:8.2px;color:#444;-webkit-text-stroke:0.07px currentColor;">A</span>
<span class="t" style="left:225.00px;top:35px;font-size:7.6px;color:#444;-webkit-text-stroke:0.07px currentColor;">A</span>
<span class="t" style="left:113.00px;top:53px;font-size:8.4px;color:#444;font-weight:700;-webkit-text-stroke:0.04px currentColor;">B</span>
<span class="t" style="left:128.40px;top:54px;font-size:8.4px;color:#444;font-weight:700;font-style:italic;font-family:'Liberation Serif',serif;-webkit-text-stroke:0.04px currentColor;">I</span>
<span class="t" style="left:141.80px;top:54px;font-size:7.8px;color:#444;-webkit-text-stroke:0.07px currentColor;">U</span>
<svg style="left:0;top:0" width="984" height="509" viewBox="0 0 984 509" shape-rendering="geometricPrecision"><rect x="141.80" y="61.00" width="5.60" height="0.80" fill="#444"/></svg>
<span class="t" style="left:217.00px;top:53px;font-size:9.2px;color:#444;transform:scaleX(1.2);transform-origin:0 0;-webkit-text-stroke:0.07px currentColor;">A</span>
<svg style="left:0;top:0" width="984" height="509" viewBox="0 0 984 509" shape-rendering="geometricPrecision"><rect x="214.80" y="60.00" width="10.60" height="2.90" fill="#f00"/><rect x="274.00" y="30.20" width="14.30" height="14.80" fill="#c8c8c8"/></svg>
<span class="t" style="left:342.10px;top:35px;font-size:7.5px;color:#444;letter-spacing:0.064px;-webkit-text-stroke:0.07px currentColor;">Wrap Text</span>
<span class="t" style="left:342.10px;top:54px;font-size:7.5px;color:#444;letter-spacing:0.089px;-webkit-text-stroke:0.07px currentColor;">Merge &amp; Center</span>
<div style="left:419.1px;top:30.2px;width:83.1px;height:12.5px;background:#fff;border:0.8px solid #dfdfdf;"></div>
<span class="t" style="left:421.20px;top:35px;font-size:7.5px;color:#444;letter-spacing:-0.181px;-webkit-text-stroke:0.07px currentColor;">General</span>
<span class="t" style="left:444.60px;top:54px;font-size:9.6px;color:#555;transform:scaleX(0.94);transform-origin:0 0;-webkit-text-stroke:0.07px currentColor;">%</span>
<span class="t" style="left:516.40px;top:51px;font-size:7.5px;color:#444;letter-spacing:0.137px;-webkit-text-stroke:0.07px currentColor;">Conditional</span>
<span class="t" style="left:514.80px;top:61px;font-size:7.5px;color:#444;letter-spacing:0.128px;-webkit-text-stroke:0.07px currentColor;">Formatting</span>
<span class="t" style="left:560.10px;top:51px;font-size:7.5px;color:#444;letter-spacing:-0.095px;-webkit-text-stroke:0.07px currentColor;">Format as</span>
<span class="t" style="left:566.00px;top:61px;font-size:7.5px;color:#444;letter-spacing:-0.233px;-webkit-text-stroke:0.07px currentColor;">Table</span>
<svg style="left:0.00px;top:0.00px" width="984" height="90" viewBox="0 0 984 90"><rect x="596.1" y="27.7" width="137.2" height="38.9" fill="#fff" stroke="#dedede" stroke-width="0.8"/><rect x="597.3" y="30.1" width="65.9" height="15.6" fill="#fff" stroke="#c4c4c4" stroke-width="1.6"/></svg>
<svg style="left:0;top:0" width="984" height="509" viewBox="0 0 984 509" shape-rendering="geometricPrecision"><rect x="666.10" y="31.00" width="64.20" height="13.60" fill="#ffc7ce"/><rect x="597.90" y="49.00" width="64.10" height="14.50" fill="#c6efce"/><rect x="666.10" y="49.00" width="64.20" height="14.50" fill="#ffeb9c"/></svg>
<span class="t" style="left:600.70px;top:34px;font-size:8.4px;color:#222;letter-spacing:0.186px;-webkit-text-stroke:0.07px currentColor;">Normal</span>
<span class="t" style="left:669.00px;top:34px;font-size:8.4px;color:#9c0006;transform:scaleX(0.9367);transform-origin:0 0;-webkit-text-stroke:0.07px currentColor;">Bad</span>
<span class="t" style="left:600.70px;top:53px;font-size:8.4px;color:#006100;letter-spacing:-0.150px;-webkit-text-stroke:0.07px currentColor;">Good</span>
<span class="t" style="left:669.00px;top:53px;font-size:8.4px;color:#9c5700;letter-spacing:0.153px;-webkit-text-stroke:0.07px currentColor;">Neutral</span>
<div style="left:733.0px;top:27.3px;width:9.3px;height:12.2px;background:#f6f6f6;border:0.8px solid #d4d4d4;"></div>
<div style="left:733.0px;top:40.3px;width:9.3px;height:12.4px;background:#f6f6f6;border:0.8px solid #d4d4d4;"></div>
<div style="left:733.0px;top:53.5px;width:9.3px;height:12.4px;background:#f6f6f6;border:0.8px solid #d4d4d4;"></div>
<span class="t" style="left:760.70px;top:51px;font-size:7.5px;color:#444;letter-spacing:-0.212px;-webkit-text-stroke:0.07px currentColor;">Insert</span>
<span class="t" style="left:785.20px;top:51px;font-size:7.5px;color:#444;letter-spacing:0.024px;-webkit-text-stroke:0.07px currentColor;">Delete</span>
<span class="t" style="left:810.80px;top:51px;font-size:7.5px;color:#444;letter-spacing:0.029px;-webkit-text-stroke:0.07px currentColor;">Format</span>
<span class="t" style="left:861.10px;top:29px;font-size:7.5px;color:#444;letter-spacing:-0.008px;-webkit-text-stroke:0.07px currentColor;">AutoSum</span>
<span class="t" style="left:861.10px;top:44px;font-size:7.5px;color:#444;letter-spacing:-0.127px;-webkit-text-stroke:0.07px currentColor;">Fill</span>
<span class="t" style="left:861.10px;top:59px;font-size:7.5px;color:#444;letter-spacing:-0.231px;-webkit-text-stroke:0.07px currentColor;">Clear</span>
<span class="t" style="left:909.60px;top:29px;font-size:8.8px;color:#2f6fbd;-webkit-text-stroke:0.07px currentColor;">A</span>
<span class="t" style="left:910.00px;top:38px;font-size:8.8px;color:#9b4fc0;-webkit-text-stroke:0.07px currentColor;">Z</span>
<span class="t" style="left:906.90px;top:51px;font-size:7.5px;color:#444;letter-spacing:0.232px;-webkit-text-stroke:0.07px currentColor;">Sort &amp;</span>
<span class="t" style="left:906.90px;top:61px;font-size:7.5px;color:#444;letter-spacing:-0.013px;-webkit-text-stroke:0.07px currentColor;">Filter</span>
<span class="t" style="left:934.60px;top:51px;font-size:7.5px;color:#444;letter-spacing:0.065px;-webkit-text-stroke:0.07px currentColor;">Find &amp;</span>
<span class="t" style="left:933.00px;top:61px;font-size:7.5px;color:#444;letter-spacing:-0.209px;-webkit-text-stroke:0.07px currentColor;">Select</span>
<svg style="left:0;top:0" width="984" height="90" viewBox="0 0 984 90"><path d="M96.20 78.50 V75.30 H99.80" fill="none" stroke="#666" stroke-width="0.7"/><path d="M98.00 76.90 L100.40 78.90" stroke="#666" stroke-width="0.7"/><path d="M100.70 77.10 V79.20 H98.60 Z" fill="#666"/><path d="M232.80 78.50 V75.30 H236.40" fill="none" stroke="#666" stroke-width="0.7"/><path d="M234.60 76.90 L237.00 78.90" stroke="#666" stroke-width="0.7"/><path d="M237.30 77.10 V79.20 H235.20 Z" fill="#666"/><path d="M406.80 78.50 V75.30 H410.40" fill="none" stroke="#666" stroke-width="0.7"/><path d="M408.60 76.90 L411.00 78.90" stroke="#666" stroke-width="0.7"/><path d="M411.30 77.10 V79.20 H409.20 Z" fill="#666"/><path d="M501.10 78.50 V75.30 H504.70" fill="none" stroke="#666" stroke-width="0.7"/><path d="M502.90 76.90 L505.30 78.90" stroke="#666" stroke-width="0.7"/><path d="M505.60 77.10 V79.20 H503.50 Z" fill="#666"/><path d="M15.50 63.40 h2.9 l-1.45 1.6 z" fill="#555"/><path d="M69.00 46.90 h2.9 l-1.45 1.6 z" fill="#555"/><rect x="9.8" y="30.4" width="14.1" height="15.4" rx="0.8" fill="#ecc478"/><rect x="13.4" y="28.6" width="7.0" height="3.0" rx="0.6" fill="#6d6d6d"/><rect x="15.3" y="27.8" width="3.2" height="1.6" rx="0.8" fill="#6d6d6d"/><rect x="14.6" y="29.8" width="4.6" height="1.0" fill="#e9e9e9"/><path d="M19.3 37.9 H24.2 L26.8 40.5 V47.0 H19.3 Z" fill="#fff" stroke="#7a7a7a" stroke-width="0.7"/><path d="M24.2 37.9 V40.5 H26.8" fill="none" stroke="#7a7a7a" stroke-width="0.6"/><path d="M34.6 28.0 L38.6 34.0 M39.4 28.0 L35.4 34.0" stroke="#555" stroke-width="0.9" fill="none"/><circle cx="34.8" cy="35.2" r="1.5" fill="none" stroke="#3b78c3" stroke-width="0.8"/><circle cx="39.2" cy="35.2" r="1.5" fill="none" stroke="#3b78c3" stroke-width="0.8"/><path d="M33.4 43.0 H36.8 L38.4 44.6 V49.0 H33.4 Z" fill="#fff" stroke="#6a6a6a" stroke-width="0.7"/><path d="M36.2 45.6 H39.6 L41.4 47.4 V51.6 H36.2 Z" fill="#fff" stroke="#6a6a6a" stroke-width="0.7"/><path d="M37.4 48.4 H40.2 M37.4 49.8 H40.2" stroke="#3b78c3" stroke-width="0.6"/><path d="M34.4 45.2 H36 M34.4 46.6 H35.6" stroke="#3b78c3" stroke-width="0.6"/><path d="M33.6 62.4 L37.2 60.0 L39.4 63.2 L35.8 65.8 Z" fill="#ecc06a"/><path d="M37.6 59.8 L39.2 58.8 L41.0 61.4 L39.6 62.6 Z" fill="#666"/><path d="M39.6 59.6 L41.4 58.4 M40.6 58.2 v1.6 M39.8 59 h1.6" stroke="#555" stroke-width="0.6"/><path d="M158.7 36.0 L162.60 40.8 L166.5 36.0" fill="none" stroke="#444" stroke-width="0.9"/><path d="M195.8 36.0 L199.70 40.8 L203.6 36.0" fill="none" stroke="#444" stroke-width="0.9"/><path d="M215.2 34.7 l1.4 -1.8 l1.4 1.8 z" fill="#3b78c3"/><path d="M229.2 33.3 l1.4 1.8 l1.4 -1.8 z" fill="#3b78c3"/><path d="M154.00 57.20 h2.9 l-1.45 1.6 z" fill="#555"/><rect x="166.9" y="53.6" width="8.6" height="7.8" fill="none" stroke="#b9b9b9" stroke-width="0.8"/><path d="M171.2 53.6 V61.4 M166.9 57.5 H175.5" stroke="#b9b9b9" stroke-width="0.8"/><path d="M181.00 57.20 h2.9 l-1.45 1.6 z" fill="#555"/><rect x="193.0" y="60.0" width="10.1" height="2.9" fill="#ffff00"/><path d="M195.4 56.4 L199.2 53.9 L201.6 57.2 L197.8 59.6 Z" fill="#fff" stroke="#555" stroke-width="0.75"/><ellipse cx="197.4" cy="53.9" rx="1.3" ry="1.6" fill="none" stroke="#555" stroke-width="0.65"/><path d="M202.4 56.0 q1.6 1.9 0.2 3.0 q-1.2 -0.8 -0.2 -3.0 z" fill="#3b78c3"/><path d="M207.40 57.20 h2.9 l-1.45 1.6 z" fill="#555"/><path d="M229.60 57.20 h2.9 l-1.45 1.6 z" fill="#555"/><path d="M247.80 33.2 H257.20" stroke="#8c8c8c" stroke-width="0.75"/><path d="M249.00 34.15 H256.00" stroke="#8c8c8c" stroke-width="0.75"/><path d="M247.80 36.3 H257.20" stroke="#8c8c8c" stroke-width="0.75"/><path d="M261.90 35.6 H272.00" stroke="#8c8c8c" stroke-width="0.75"/><path d="M263.20 36.55 H270.70" stroke="#8c8c8c" stroke-width="0.75"/><path d="M263.20 38.4 H270.70" stroke="#8c8c8c" stroke-width="0.75"/><path d="M261.90 39.35 H272.00" stroke="#8c8c8c" stroke-width="0.75"/><path d="M278.00 37.6 H284.90" stroke="#787878" stroke-width="0.75"/><path d="M276.70 38.55 H286.20" stroke="#787878" stroke-width="0.75"/><path d="M278.00 40.4 H284.90" stroke="#787878" stroke-width="0.75"/><path d="M276.70 41.35 H286.20" stroke="#787878" stroke-width="0.75"/><g transform="rotate(-45 298.6 36.6)"><text x="294.2" y="38.8" font-size="7.2" fill="#444" font-family="Liberation Sans">ab</text></g><path d="M298.8 41.6 L304.2 36.6" stroke="#555" stroke-width="0.8"/><path d="M305.4 35.4 l-2.7 0.7 l1.9 2.0 z" fill="#555"/><path d="M308.20 37.10 h2.9 l-1.45 1.6 z" fill="#555"/><path d="M248.80 55.2 H256.20" stroke="#8c8c8c" stroke-width="0.75"/><path d="M248.80 56.15 H254.60" stroke="#8c8c8c" stroke-width="0.75"/><path d="M248.80 58.2 H256.20" stroke="#8c8c8c" stroke-width="0.75"/><path d="M248.80 59.15 H254.60" stroke="#8c8c8c" stroke-width="0.75"/><path d="M262.60 55.2 H271.20" stroke="#8c8c8c" stroke-width="0.75"/><path d="M264.00 56.15 H269.80" stroke="#8c8c8c" stroke-width="0.75"/><path d="M262.60 58.2 H271.20" stroke="#8c8c8c" stroke-width="0.75"/><path d="M264.00 59.15 H269.80" stroke="#8c8c8c" stroke-width="0.75"/><path d="M277.20 55.2 H285.20" stroke="#8c8c8c" stroke-width="0.75"/><path d="M279.20 56.15 H285.20" stroke="#8c8c8c" stroke-width="0.75"/><path d="M277.20 58.2 H285.20" stroke="#8c8c8c" stroke-width="0.75"/><path d="M279.20 59.15 H285.20" stroke="#8c8c8c" stroke-width="0.75"/><path d="M295.70 53.3 H304.90" stroke="#808080" stroke-width="0.85"/><path d="M295.70 61.5 H304.90" stroke="#808080" stroke-width="0.85"/><path d="M300.90 55.2 H304.90" stroke="#909090" stroke-width="0.8"/><path d="M300.90 56.1 H304.90" stroke="#909090" stroke-width="0.8"/><path d="M300.90 58.7 H304.90" stroke="#909090" stroke-width="0.8"/><path d="M300.90 59.6 H304.90" stroke="#909090" stroke-width="0.8"/><path d="M300.09999999999997 57.4 H296.2" stroke="#2f6fbd" stroke-width="1.1" fill="none"/><path d="M298.09999999999997 55.2 L295.9 57.4 L298.09999999999997 59.6" fill="none" stroke="#2f6fbd" stroke-width="1.1"/><path d="M310.00 53.3 H319.20" stroke="#808080" stroke-width="0.85"/><path d="M310.00 61.5 H319.20" stroke="#808080" stroke-width="0.85"/><path d="M315.20 55.2 H319.20" stroke="#909090" stroke-width="0.8"/><path d="M315.20 56.1 H319.20" stroke="#909090" stroke-width="0.8"/><path d="M315.20 58.7 H319.20" stroke="#909090" stroke-width="0.8"/><path d="M315.20 59.6 H319.20" stroke="#909090" stroke-width="0.8"/><path d="M310.0 57.4 H314.0" stroke="#2f6fbd" stroke-width="1.1" fill="none"/><path d="M312.2 55.2 L314.4 57.4 L312.2 59.6" fill="none" stroke="#2f6fbd" stroke-width="1.1"/><text x="330.6" y="37.2" font-size="5.6" fill="#444" font-family="Liberation Sans">ab</text><text x="330.8" y="41.8" font-size="5.6" fill="#444" font-family="Liberation Sans">c</text><path d="M338.4 37.8 q0.8 2.8 -2.4 2.8" fill="none" stroke="#3b78c3" stroke-width="0.8"/><path d="M334.6 40.6 l1.8 -1.3 v2.6 z" fill="#3b78c3"/><rect x="329.4" y="52.4" width="10.0" height="9.4" fill="#fff" stroke="#9c9c9c" stroke-width="0.7"/><path d="M329.4 54.8 H339.4 M329.4 59.4 H339.4 M334.4 52.4 V54.8 M334.4 59.4 V61.8" stroke="#9c9c9c" stroke-width="0.6"/><path d="M331.4 57.1 H337.4" fill="none" stroke="#2f6fbd" stroke-width="0.7"/><path d="M330.6 57.1 l1.7 -1.3 v2.6 z M338.2 57.1 l-1.7 -1.3 v2.6 z" fill="#2f6fbd"/><path d="M402.80 57.20 h2.9 l-1.45 1.6 z" fill="#555"/><path d="M493.0 36.0 L497.00 40.8 L501.0 36.0" fill="none" stroke="#444" stroke-width="0.9"/><rect x="421.3" y="53.0" width="9.6" height="5.4" rx="0.6" fill="#3a82d2"/><ellipse cx="426.1" cy="55.7" rx="2.2" ry="1.5" fill="#fff"/><circle cx="426.1" cy="55.7" r="0.8" fill="#3a82d2"/><rect x="424.6" y="58.8" width="3.6" height="3.6" fill="#f3d49a"/><rect x="427.6" y="56.8" width="3.4" height="4.0" fill="#f6ddb0"/><path d="M424.6 60 h3.6 M424.6 61.2 h3.6 M427.6 58 h3.4 M427.6 59.4 h3.4" stroke="#e2a94a" stroke-width="0.4"/><path d="M435.80 57.20 h2.9 l-1.45 1.6 z" fill="#555"/><path d="M461.8 56.7 a1.25 1.25 0 1 1 2.4 0.5 q-0.5 1.6 -2.2 2.5 l-0.3 -0.4 q1.1 -0.8 1.0 -1.6 q-0.8 -0.1 -0.9 -1.0 z" fill="#444"/><text x="481.6" y="57.0" font-size="4.9" fill="#444" font-family="Liberation Sans">.0</text><text x="479.0" y="61.9" font-size="4.9" fill="#444" font-family="Liberation Sans">.00</text><path d="M481.4 55.2 H478.4 M479.6 54.1 L478.4 55.2 L479.6 56.3" fill="none" stroke="#2f6fbd" stroke-width="0.8"/><text x="493.0" y="57.0" font-size="4.9" fill="#444" font-family="Liberation Sans">.00</text><text x="496.2" y="61.9" font-size="4.9" fill="#444" font-family="Liberation Sans">.0</text><path d="M492.4 60.0 H495.6 M494.4 58.9 L495.6 60.0 L494.4 61.1" fill="none" stroke="#2f6fbd" stroke-width="0.8"/><rect x="527.8" y="30.4" width="17.2" height="14.2" fill="#fff" stroke="#9a9a9a" stroke-width="0.6"/><path d="M527.8 33.95 H545" stroke="#9a9a9a" stroke-width="0.5"/><path d="M527.8 37.50 H545" stroke="#9a9a9a" stroke-width="0.5"/><path d="M527.8 41.05 H545" stroke="#9a9a9a" stroke-width="0.5"/><path d="M533.0 30.4 V44.6" stroke="#9a9a9a" stroke-width="0.5"/><path d="M537.2 30.4 V44.6" stroke="#9a9a9a" stroke-width="0.5"/><path d="M541.2 30.4 V44.6" stroke="#9a9a9a" stroke-width="0.5"/><rect x="533.0" y="30.6" width="3.6" height="3.3" fill="#e0583b"/><rect x="533.0" y="34.0" width="5.2" height="3.4" fill="#4472c4"/><rect x="533.0" y="37.6" width="3.6" height="3.4" fill="#e0583b"/><rect x="533.0" y="41.1" width="2.8" height="3.3" fill="#4472c4"/><rect x="537.2" y="40.4" width="9.4" height="7.0" fill="#fff" stroke="#777" stroke-width="0.7"/><path d="M539.6 43.0 H544.2 M539.6 44.8 H544.2 M543.4 41.6 L540.6 46.4" stroke="#444" stroke-width="0.8"/><path d="M554.30 63.60 h2.9 l-1.45 1.6 z" fill="#555"/><rect x="568.0" y="30.4" width="17.2" height="14.2" fill="#fff" stroke="#9a9a9a" stroke-width="0.6"/><rect x="572.2" y="34.0" width="13.0" height="10.6" fill="#b9cde9"/><path d="M568 33.95 H585.2" stroke="#9a9a9a" stroke-width="0.5"/><path d="M568 37.50 H585.2" stroke="#9a9a9a" stroke-width="0.5"/><path d="M568 41.05 H585.2" stroke="#9a9a9a" stroke-width="0.5"/><path d="M572.2 30.4 V44.6" stroke="#9a9a9a" stroke-width="0.5"/><path d="M576.6 30.4 V44.6" stroke="#9a9a9a" stroke-width="0.5"/><path d="M580.9 30.4 V44.6" stroke="#9a9a9a" stroke-width="0.5"/><path d="M581.6 42.6 L586.4 35.2 L587.6 36.0 L583.0 43.6 Z" fill="#6a6a6a"/><path d="M573.6 47.4 q3.4 -0.2 4.6 -3.4 q2.2 -2.0 4.4 -0.2 q1.0 2.6 -2.2 3.4 q-3.2 0.8 -6.8 0.2 z" fill="#3b78c3"/><ellipse cx="580.4" cy="44.6" rx="1.3" ry="0.7" fill="#fff"/><path d="M585.50 63.60 h2.9 l-1.45 1.6 z" fill="#555"/><path d="M734.4 35.4 L738.50 31.6 L742.6 35.4" fill="none" stroke="#a0a0a0" stroke-width="0.8"/><path d="M734.4 45.2 L738.50 49.2 L742.6 45.2" fill="none" stroke="#666" stroke-width="0.8"/><path d="M734.2 55.8 H742.8" stroke="#666" stroke-width="0.9"/><path d="M734.4 59.2 L738.50 63.2 L742.6 59.2" fill="none" stroke="#666" stroke-width="0.8"/><rect x="761.0" y="28.8" width="9.2" height="3.2" fill="#fff" stroke="#8a8a8a" stroke-width="0.6"/><path d="M765.6 28.8 v3.2" stroke="#8a8a8a" stroke-width="0.5"/><rect x="768.0" y="34.4" width="9.8" height="3.2" fill="#b9cde9" stroke="#8a8a8a" stroke-width="0.6"/><path d="M772.9 34.4 v3.2" stroke="#8a8a8a" stroke-width="0.5"/><path d="M766.8 36.0 H760.4 M763.0 33.4 L760.2 36.0 L763.0 38.6" fill="none" stroke="#2f6fbd" stroke-width="1.1"/><rect x="761.0" y="40.4" width="9.2" height="6.0" fill="#fff" stroke="#8a8a8a" stroke-width="0.6"/><path d="M765.6 40.4 V46.4 M761.0 43.4 H770.2" stroke="#8a8a8a" stroke-width="0.5"/><path d="M768.10 63.40 h2.9 l-1.45 1.6 z" fill="#555"/><rect x="788.4" y="28.8" width="9.2" height="3.2" fill="#fff" stroke="#8a8a8a" stroke-width="0.6"/><path d="M793.0 28.8 v3.2" stroke="#8a8a8a" stroke-width="0.5"/><rect x="791.6" y="34.4" width="6.6" height="3.0" fill="#b9cde9" stroke="#8a8a8a" stroke-width="0.5"/><rect x="788.4" y="39.6" width="9.2" height="6.6" fill="#fff" stroke="#8a8a8a" stroke-width="0.6"/><path d="M793.0 39.6 V46.2 M788.4 42.9 H797.6" stroke="#8a8a8a" stroke-width="0.5"/><path d="M798.2 32.6 L805.4 39.4 M805.0 32.8 L798.0 39.2" stroke="#e0583b" stroke-width="1.1"/><path d="M795.10 63.40 h2.9 l-1.45 1.6 z" fill="#555"/><path d="M814.4 29.6 H828.4 M814.4 28.2 V31.0 M828.4 28.2 V31.0" stroke="#2f6fbd" stroke-width="0.7"/><path d="M816.2 28.6 L814.8 29.6 L816.2 30.6 M826.6 28.6 L828.0 29.6 L826.6 30.6" fill="none" stroke="#2f6fbd" stroke-width="0.6"/><rect x="814.2" y="32.6" width="17.4" height="12.6" fill="#fff" stroke="#8a8a8a" stroke-width="0.6"/><path d="M818.6 32.6 V45.2 M823.6 32.6 V45.2 M827.6 32.6 V45.2 M814.2 35.8 H831.6 M814.2 41.8 H831.6" stroke="#8a8a8a" stroke-width="0.5"/><rect x="818.8" y="36.0" width="4.6" height="5.6" fill="#2f6fbd"/><path d="M815.6 45.2 q1.6 2.0 3.6 0.6 q2.0 1.6 4.2 0 q1.8 1.2 3.4 -0.6" fill="none" stroke="#aaa" stroke-width="0.5"/><path d="M821.40 63.40 h2.9 l-1.45 1.6 z" fill="#555"/><path d="M856.8 30.6 V29.6 H850.2 L853.5 32.8 L850.2 36.0 H856.8 V35.0" fill="none" stroke="#3a3a3a" stroke-width="1.1"/><path d="M898.90 32.10 h2.9 l-1.45 1.6 z" fill="#555"/><rect x="849.4" y="44.0" width="8.2" height="7.6" fill="#fff" stroke="#666" stroke-width="0.7"/><path d="M849.2 43.0 H857.8" stroke="#666" stroke-width="0.7"/><path d="M853.5 45.0 V49.6 M851.4 47.8 L853.5 50.0 L855.6 47.8" fill="none" stroke="#2f6fbd" stroke-width="1.2"/><path d="M872.80 47.00 h2.9 l-1.45 1.6 z" fill="#555"/><path d="M849.8 63.2 L854.8 58.6 L857.8 61.4 L852.8 66.0 Z" fill="#ec8a98"/><path d="M849.8 63.2 L851.6 61.6 L854.4 64.4 L852.8 66.0 Z" fill="#f5b9c2"/><path d="M880.60 61.70 h2.9 l-1.45 1.6 z" fill="#555"/><path d="M918.0 33.2 H927.0 L923.7 36.8 V41.4 L921.3 40.2 V36.8 Z" fill="#7d7d7d"/><path d="M926.40 63.60 h2.9 l-1.45 1.6 z" fill="#555"/><circle cx="947.8" cy="35.4" r="5.9" fill="#fff" stroke="#2f6fbd" stroke-width="1.3"/><path d="M943.4 39.7 L937.8 45.1" stroke="#2f6fbd" stroke-width="2.2"/><path d="M955.60 63.60 h2.9 l-1.45 1.6 z" fill="#555"/><path d="M972.2 79.9 L975.50 76.7 L978.8 79.9" fill="none" stroke="#555" stroke-width="0.8"/><path d="M344.4 14.6 a3.3 3.3 0 1 1 3.2 0 v1.6 h-3.2 z M344.6 17.4 h2.8 M345.2 18.5 h1.6" fill="none" stroke="#fff" stroke-width="0.8"/><circle cx="944.2" cy="12.6" r="2.5" fill="none" stroke="#fff" stroke-width="0.8"/><path d="M939.4 19.2 q0.6 -3.8 3.6 -4.2" fill="none" stroke="#fff" stroke-width="0.8"/><path d="M945.2 17.6 h3.6 M947.0 15.8 v3.6" stroke="#fff" stroke-width="0.8"/></svg>
<span class="t" style="left:5.00px;top:94px;font-size:7.6px;color:#444;letter-spacing:0.338px;-webkit-text-stroke:0.07px currentColor;">A14</span>
<span class="t" style="left:140.20px;top:91px;font-size:11.3px;color:#606060;font-weight:700;font-style:italic;font-family:'Liberation Serif',serif;-webkit-text-stroke:0.04px currentColor;">f</span>
<span class="t" style="left:143.60px;top:94px;font-size:8.2px;color:#606060;font-weight:700;font-style:italic;font-family:'Liberation Serif',serif;-webkit-text-stroke:0.04px currentColor;">x</span>
<svg style="left:0;top:0" width="984" height="509" viewBox="0 0 984 509" shape-rendering="geometricPrecision"><rect x="51.40" y="480.80" width="52.90" height="14.30" fill="#fff"/><rect x="104.00" y="482.40" width="0.80" height="12.70" fill="#b4b4b4"/><rect x="51.40" y="493.90" width="52.90" height="1.25" fill="#217346"/></svg>
<span class="t" style="left:57.60px;top:484px;font-size:8.1px;color:#217346;letter-spacing:0.060px;font-weight:700;-webkit-text-stroke:0.04px currentColor;">Scorecard</span>
<span class="t" style="left:111.00px;top:484px;font-size:8.1px;color:#444;letter-spacing:0.032px;-webkit-text-stroke:0.07px currentColor;">Factors</span>
<svg style="left:0;top:0" width="984" height="509" viewBox="0 0 984 509" shape-rendering="geometricPrecision"><rect x="145.10" y="484.20" width="0.80" height="10.20" fill="#ababab"/><rect x="597.00" y="484.30" width="374.00" height="9.60" fill="#d2d2d2"/><rect x="597.00" y="484.30" width="10.50" height="9.60" fill="#b9b9b9"/><rect x="961.10" y="484.30" width="9.90" height="9.60" fill="#b9b9b9"/><rect x="597.70" y="485.00" width="9.20" height="8.50" fill="#fff"/><rect x="607.80" y="485.00" width="334.50" height="8.50" fill="#fff"/><rect x="942.30" y="485.00" width="19.10" height="8.50" fill="#dadada"/><rect x="961.70" y="485.00" width="8.80" height="8.50" fill="#fff"/><rect x="800.20" y="496.90" width="24.60" height="12.10" fill="#c6c6c6"/><rect x="876.80" y="503.50" width="5.00" height="0.80" fill="#505050"/><rect x="884.30" y="504.00" width="63.50" height="0.70" fill="#bdbdbd"/><rect x="914.90" y="500.10" width="2.90" height="7.20" fill="#6e6e6e"/><rect x="950.40" y="503.50" width="4.80" height="0.80" fill="#505050"/><rect x="952.40" y="501.50" width="0.80" height="4.80" fill="#505050"/></svg>
<span class="t" style="left:963.00px;top:503px;font-size:6.6px;color:#444;transform:scaleX(0.8945);transform-origin:0 0;-webkit-text-stroke:0.07px currentColor;">100%</span>
<svg style="left:0;top:0" width="984" height="509" viewBox="0 0 984 509"><path d="M58.3 95.3 h3.8 l-1.9 2.3 z" fill="#555"/><rect x="75.4" y="93.1" width="1.2" height="1.1" fill="#8a8a8a"/><rect x="75.4" y="95.7" width="1.2" height="1.1" fill="#8a8a8a"/><rect x="75.4" y="98.4" width="1.2" height="1.1" fill="#8a8a8a"/><path d="M93.9 93.4 L100.8 99.7 M100.8 93.4 L93.9 99.7" stroke="#ababab" stroke-width="1.0"/><path d="M116.6 97.0 L119.8 99.9 L124.9 93.6" fill="none" stroke="#ababab" stroke-width="1.0"/><path d="M973.2 95.2 L975.5 97.5 L977.8 95.2" fill="none" stroke="#555" stroke-width="1.1"/><path d="M15.4 486.6 v4.2 l-2.4 -2.1 z M27.6 486.6 v4.2 l2.4 -2.1 z" fill="#c3c3c3"/><circle cx="167.9" cy="489.4" r="4.7" fill="none" stroke="#6a6a6a" stroke-width="0.7"/><path d="M165.3 489.4 h5.2 M167.9 486.8 v5.2" stroke="#6a6a6a" stroke-width="0.8"/><rect x="588.2" y="486.2" width="1.2" height="1.1" fill="#909090"/><rect x="588.2" y="488.8" width="1.2" height="1.1" fill="#909090"/><rect x="588.2" y="491.4" width="1.2" height="1.1" fill="#909090"/><path d="M603.4 487.2 v4.2 l-2.8 -2.1 z" fill="#555"/><path d="M965.2 487.1 v4.4 l2.8 -2.2 z" fill="#555"/><rect x="808.3" y="499.9" width="8.6" height="7.4" fill="none" stroke="#555" stroke-width="0.7"/><path d="M811.2 499.9 v7.4 M814.0 499.9 v7.4 M808.3 502.4 h8.6 M808.3 504.8 h8.6" stroke="#555" stroke-width="0.6"/><rect x="832.5" y="499.9" width="8.9" height="7.4" rx="0.8" fill="none" stroke="#777" stroke-width="0.7"/><rect x="835.0" y="501.4" width="3.9" height="4.4" fill="none" stroke="#777" stroke-width="0.6"/><path d="M836.0 502.8 h1.9 M836.0 504.2 h1.9" stroke="#999" stroke-width="0.4"/><rect x="857.2" y="499.9" width="8.6" height="7.4" fill="none" stroke="#666" stroke-width="0.7"/><path d="M860.2 499.9 v4.4 h5.6 M863.0 499.9 v4.4" fill="none" stroke="#666" stroke-width="0.6"/></svg>
</body></html>
